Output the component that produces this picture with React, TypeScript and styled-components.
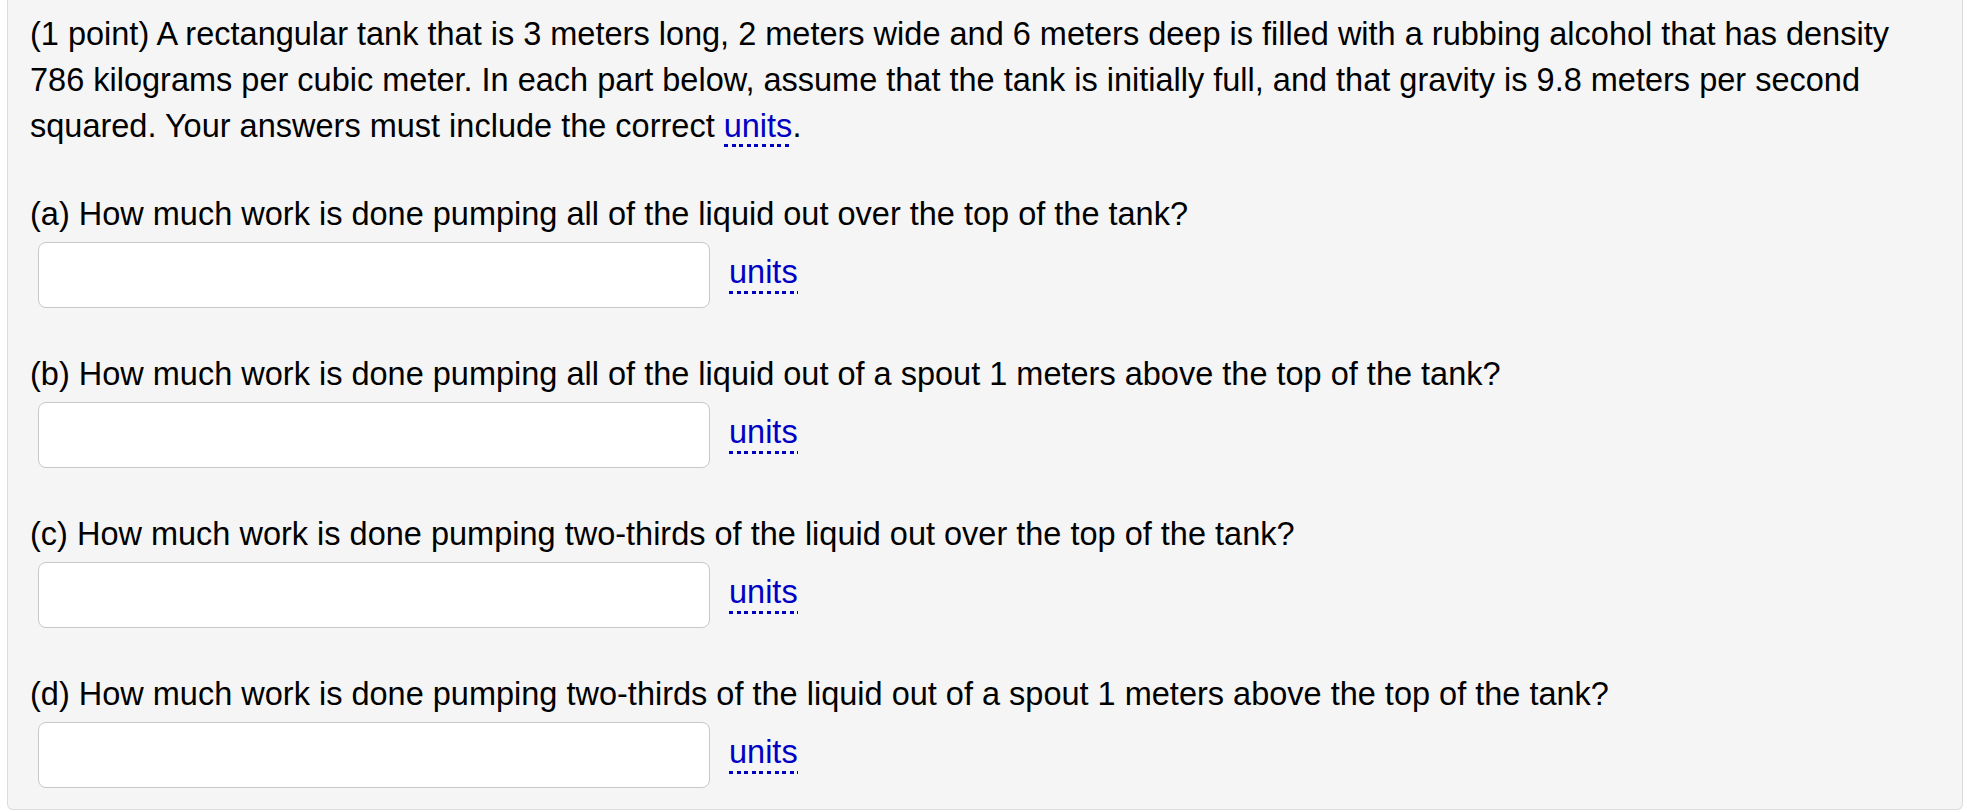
import styled, { createGlobalStyle } from "styled-components"

const GlobalStyle = createGlobalStyle`
  html, body {
    margin: 0;
    padding: 0;
    background: #ffffff;
  }
  body {
    font-family: "Liberation Sans", Helvetica, Arial, sans-serif;
  }
`

const questions = [
    "(a) How much work is done pumping all of the liquid out over the top of the tank?",
    "(b) How much work is done pumping all of the liquid out of a spout 1 meters above the top of the tank?",
    "(c) How much work is done pumping two-thirds of the liquid out over the top of the tank?",
    "(d) How much work is done pumping two-thirds of the liquid out of a spout 1 meters above the top of the tank?",
]

const Problem = styled.div`
    margin: 0 7px 0 7px;
    height: 810px;
    box-sizing: border-box;
    padding: 11px 22px 0 22px;
    background-color: #f5f5f5;
    border: 1px solid #dcdcdc;
    border-top: none;
    border-radius: 0 0 6px 6px;
    color: #000;
    font-size: 32.5px;
    line-height: 46px;
`

const Intro = styled.div`
    margin: 0;
    white-space: nowrap;
`

// dotted underline drawn as square dots, like the original help link
const UnitsLink = styled.span`
    color: #0000c4;
    cursor: help;
    padding-bottom: 3px;
    background: repeating-linear-gradient(to right, #0000c4 0 4px, transparent 4px 7.6px) left bottom / 100% 3px no-repeat;
`

const RowUnits = styled(UnitsLink)`
    line-height: 37px;
    margin-bottom: 3px;
`

const Part = styled.div`
    display: flex;
    flex-direction: column;
    margin-top: 42px;
    & + & {
        margin-top: 43px;
    }
`

const Question = styled.div`
    height: 46px;
    white-space: nowrap;
`

const AnswerRow = styled.div`
    display: flex;
    align-items: center;
    gap: 19px;
    margin-top: 5px;
    padding-left: 8px;
`

const AnswerInput = styled.input`
    width: 672px;
    height: 66px;
    box-sizing: border-box;
    border: 1px solid #c8c8c8;
    border-radius: 8px;
    background: #ffffff;
    padding: 0 12px;
    font-size: 28px;
    font-family: inherit;
    outline: none;
`

const App = () => {
    return (
        <>
            <GlobalStyle />
            <Problem>
                <Intro>
                    (1 point) A rectangular tank that is 3 meters long, 2 meters wide and 6 meters deep is filled with a rubbing alcohol that has density
                    <br />
                    786 kilograms per cubic meter. In each part below, assume that the tank is initially full, and that gravity is 9.8 meters per second
                    <br />
                    squared. Your answers must include the correct <UnitsLink>units</UnitsLink>.
                </Intro>
                {questions.map((q) => (
                    <Part key={q}>
                        <Question>{q}</Question>
                        <AnswerRow>
                            <AnswerInput type="text" />
                            <RowUnits>units</RowUnits>
                        </AnswerRow>
                    </Part>
                ))}
            </Problem>
        </>
    )
}

export default App
